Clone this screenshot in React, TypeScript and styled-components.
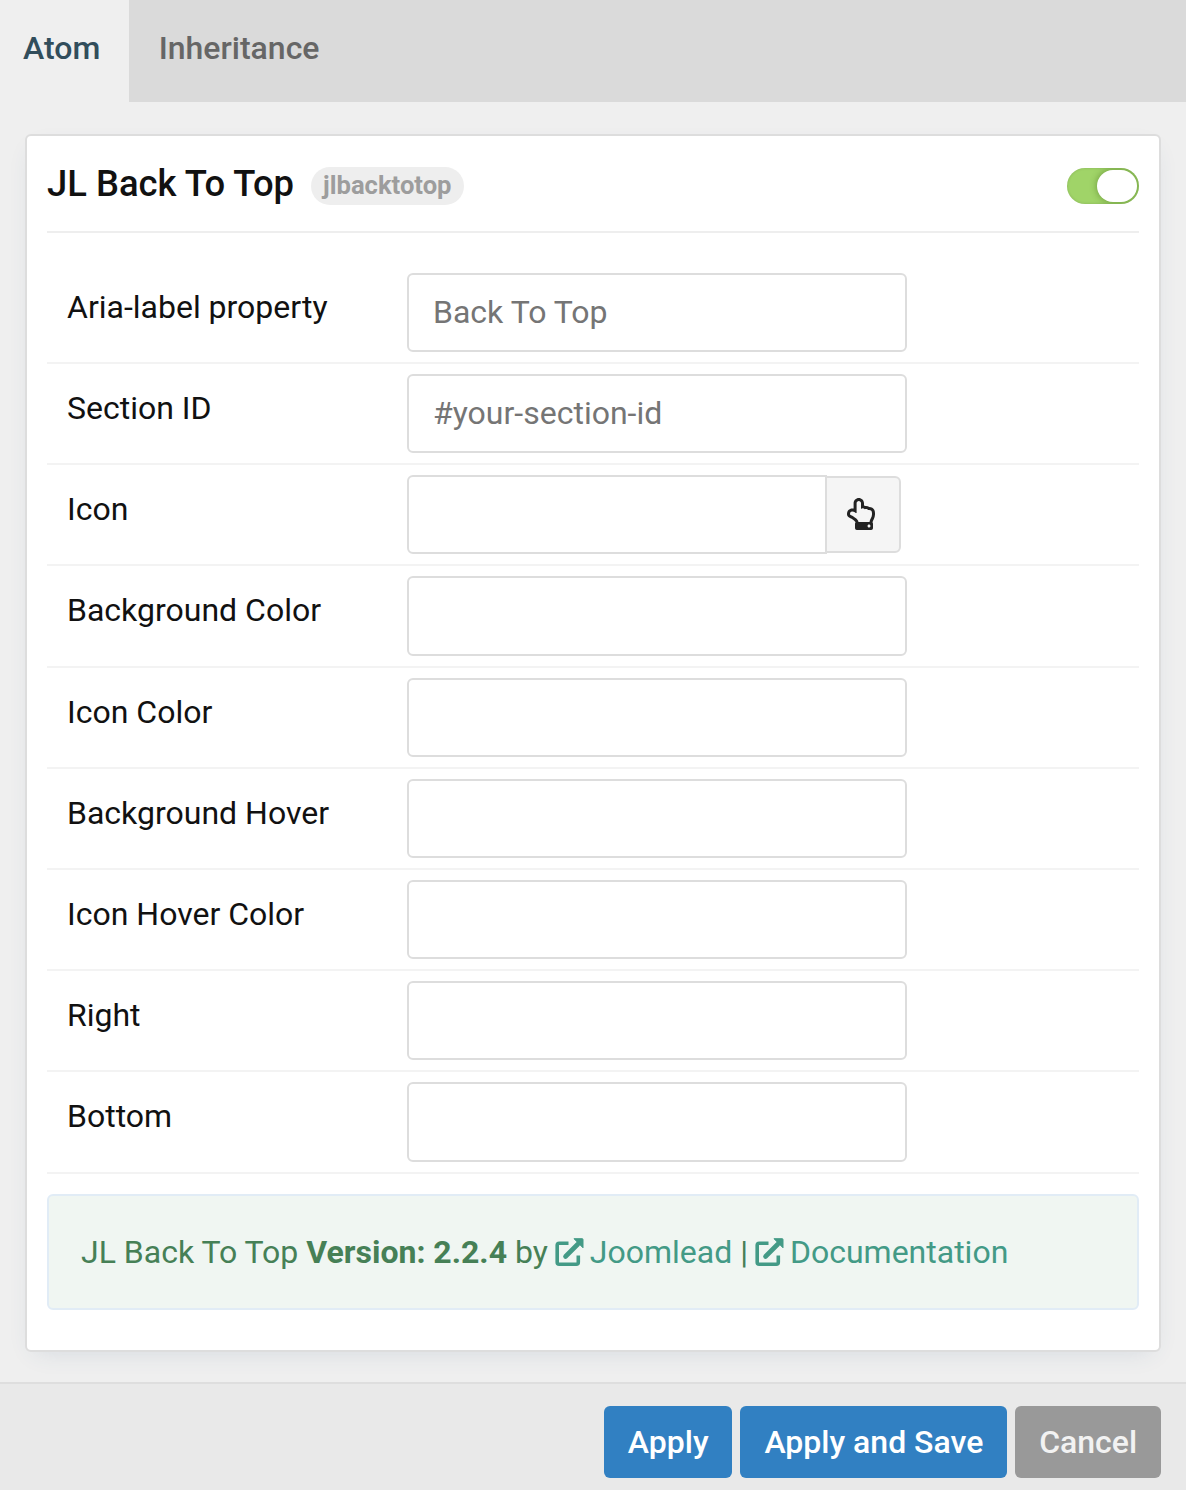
import React, { useState } from "react";
import styled, { createGlobalStyle } from "styled-components";
import { FaRegHandPointUp } from "react-icons/fa";

const GlobalStyle = createGlobalStyle`
  *, *::before, *::after { box-sizing: border-box; }
  body {
    margin: 0;
    background: #efefef;
    color: #111;
    font-family: Roboto, "Noto Sans", sans-serif;
    font-size: 32px;
    line-height: 48px;
    -webkit-font-smoothing: antialiased;
  }
`;

const Page = styled.div`
  display: flex;
  flex-direction: column;
  height: 1490px;
  overflow: hidden;
`;

const Tabs = styled.nav`
  display: flex;
  height: 102px;
  flex: none;
  background: #dadada;
`;

const Tab = styled.button<{ $active?: boolean }>`
  border: 0;
  height: 102px;
  padding: ${(p) => (p.$active ? "0 29px 6px 23px" : "0 30px 6px 29.4px")};
  background: ${(p) => (p.$active ? "#efefef" : "transparent")};
  color: ${(p) => (p.$active ? "#314d5b" : "#666")};
  font: 500 32px/48px Roboto, sans-serif;
`;

const Card = styled.section`
  flex: none;
  margin: 32px 25px 0;
  height: 1218px;
  padding: 0 20px;
  background: #fff;
  border: 2px solid #ddd;
  border-radius: 6px;
  box-shadow: 0 8px 24px -10px rgba(50, 90, 130, 0.16);
`;

const CardHeader = styled.header`
  display: flex;
  align-items: center;
  height: 97px;
  border-bottom: 2px solid #eee;
  margin-bottom: 29.86px;
`;

const Title = styled.h4`
  margin: 0;
  font-size: 36.4px;
  font-weight: 500;
  line-height: 48px;
`;

const Badge = styled.span`
  margin: 4px 0 0 17px;
  height: 38px;
  padding: 0 12px;
  border-radius: 19px;
  background: #eee;
  color: #9d9d9d;
  font-size: 25.6px;
  font-weight: 700;
  line-height: 37px;
`;

const Switch = styled.button`
  margin: 4px 0 0 auto;
  width: 72px;
  height: 36px;
  padding: 2px;
  border: 0;
  border-radius: 18px;
  display: flex;
  justify-content: flex-end;
  background: #a0d468;
  box-shadow: inset 0 0 3px rgba(0, 0, 0, 0.16);
  overflow: hidden;
`;

const Knob = styled.span`
  width: 40px;
  height: 32px;
  border-radius: 16px;
  background: #fff;
  box-shadow: 0 0 6px 1px rgba(60, 100, 20, 0.42);
`;

const Row = styled.div`
  display: flex;
  height: 101.2px;
  padding: 10px 20px;
  border-bottom: 2px solid #f3f3f3;
`;

const Label = styled.label`
  width: 340px;
  padding-top: 10px;
`;

const Input = styled.input<{ $grouped?: boolean }>`
  width: ${(p) => (p.$grouped ? 420 : 500)}px;
  height: 79.2px;
  padding: 0 24px 0.6px;
  border: 2px solid #ddd;
  border-radius: ${(p) => (p.$grouped ? "6px 0 0 6px" : "6px")};
  background: #fff;
  color: #111;
  font: 400 32px Roboto, sans-serif;
  outline: none;
  &::placeholder { color: #757575; opacity: 1; }
`;

const PickerButton = styled.button`
  display: flex;
  align-items: center;
  justify-content: center;
  width: 76px;
  height: 77px;
  margin: 1px 0 0 -2px;
  padding: 0 4px 1.5px 0;
  border: 2px solid #ddd;
  border-radius: 0 6px 6px 0;
  background: #f5f5f5;
  color: #222;
  font-size: 32px;
`;

const Notice = styled.div`
  display: flex;
  align-items: center;
  height: 116px;
  margin-top: 20px;
  padding: 0 32px;
  border: 2px solid #e1ecf6;
  border-radius: 6px;
  background: #f0f6f2;
  color: #468056;
  white-space: pre;
`;

const Link = styled.a`
  display: inline-flex;
  align-items: center;
  margin-left: -1px;
  color: #439a86;
  gap: 6px;
  svg { display: block; margin-top: 2px; }
`;

const Footer = styled.footer`
  display: flex;
  flex: 1;
  justify-content: flex-end;
  align-items: flex-start;
  gap: 8px;
  margin-top: 30px;
  padding: 22px 25px 0;
  border-top: 2px solid #dedede;
  background: #e9e9e9;
`;

const Button = styled.button<{ $muted?: boolean }>`
  height: 72px;
  padding: 0 23.92px;
  border: 0;
  border-radius: 6px;
  background: ${(p) => (p.$muted ? "#999" : "#3180c2")};
  color: ${(p) => (p.$muted ? "#f2f2f2" : "#fff")};
  font: 500 32px/48px Roboto, sans-serif;
`;

const ExternalIcon = () => (
  <svg width="29" height="29" viewBox="0 0 29 29" fill="none">
    <path d="M13.5 5.2H4.2Q2.2 5.2 2.2 7.2V24.3Q2.2 26.3 4.2 26.3H21.3Q23.3 26.3 23.3 24.3V17.5" stroke="currentColor" strokeWidth="3.6" />
    <path d="M10.5 18.5L23 6" stroke="currentColor" strokeWidth="4.6" strokeLinecap="round" />
    <path d="M19 .7H27.3Q28 .7 28 1.5V9.8Z" fill="currentColor" stroke="currentColor" strokeWidth="1" strokeLinejoin="round" />
  </svg>
);

const fields = [
  { label: "Aria-label property", placeholder: "Back To Top" },
  { label: "Section ID", placeholder: "#your-section-id" },
  { label: "Icon", picker: true },
  { label: "Background Color" },
  { label: "Icon Color" },
  { label: "Background Hover" },
  { label: "Icon Hover Color" },
  { label: "Right" },
  { label: "Bottom" },
];

export default function App() {
  const [values, setValues] = useState<Record<string, string>>({});
  return (
    <Page>
      <GlobalStyle />
      <Tabs>
        <Tab $active>Atom</Tab>
        <Tab>Inheritance</Tab>
      </Tabs>
      <Card>
        <CardHeader>
          <Title>JL Back To Top</Title>
          <Badge>jlbacktotop</Badge>
          <Switch role="switch" aria-checked="true"><Knob /></Switch>
        </CardHeader>
        {fields.map((f) => (
          <Row key={f.label}>
            <Label>{f.label}</Label>
            <Input
              $grouped={f.picker}
              placeholder={f.placeholder}
              value={values[f.label] ?? ""}
              onChange={(e) => setValues({ ...values, [f.label]: e.target.value })}
            />
            {f.picker && <PickerButton><FaRegHandPointUp /></PickerButton>}
          </Row>
        ))}
        <Notice>
          <span>JL Back To Top <b>Version: 2.2.4</b> by </span>
          <Link><ExternalIcon />Joomlead</Link>
          <span> | </span>
          <Link><ExternalIcon />Documentation</Link>
        </Notice>
      </Card>
      <Footer>
        <Button>Apply</Button>
        <Button>Apply and Save</Button>
        <Button $muted>Cancel</Button>
      </Footer>
    </Page>
  );
}
